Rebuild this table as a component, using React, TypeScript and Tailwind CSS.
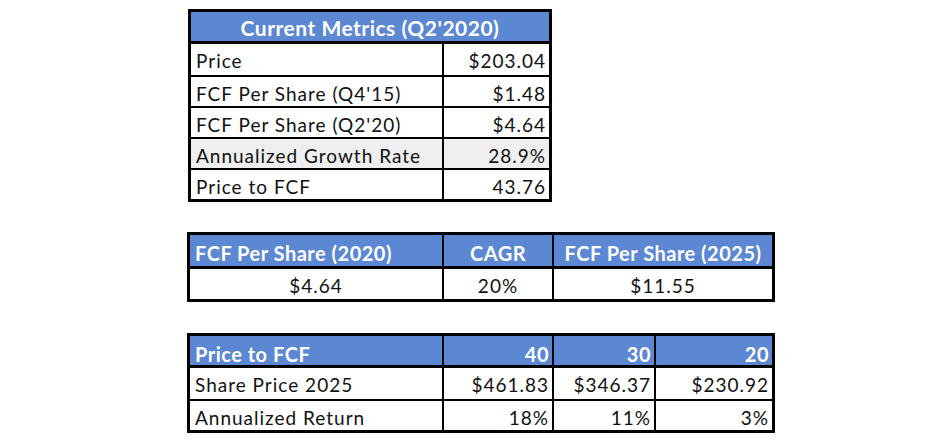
import React from "react";

const HEAD = "bg-[#5b87d3] text-white font-bold";
const BODY = "text-[#111] text-[19px] tracking-[1px]";

type Cell = { text: string; align: "left" | "center" | "right"; cls?: string };

const alignCls = (a: Cell["align"]) =>
  a === "left" ? "justify-start pl-[5px]" : a === "right" ? "justify-end pr-[3px]" : "justify-center";

const Row = ({
  cols,
  cells,
  height,
  className,
}: {
  cols: string;
  cells: Cell[];
  height: string;
  className?: string;
}) => (
  <div className={`grid ${cols} ${height} ${className ?? ""}`}>
    {cells.map((c, i) => (
      <div
        key={i}
        className={`flex items-center pt-[3px] whitespace-nowrap ${alignCls(c.align)} ${
          i > 0 ? "border-l-2 border-black" : ""
        } ${c.cls ?? ""}`}
      >
        {c.text}
      </div>
    ))}
  </div>
);

const metrics = [
  ["Price", "$203.04", ""],
  ["FCF Per Share (Q4'15)", "$1.48", ""],
  ["FCF Per Share (Q2'20)", "$4.64", ""],
  ["Annualized Growth Rate", "28.9%", "bg-[#efefef]"],
  ["Price to FCF", "43.76", ""],
];

export default function App() {
  return (
    <div className="min-h-screen bg-white pl-[187px] pt-[9px] font-['Lato',sans-serif]">
      {/* current metrics */}
      <div className="ml-[1px] w-[364px] border-[3px] border-black">
        <div
          className={`${HEAD} h-[32px] border-b-[3px] border-black flex items-center justify-center pt-[2px] text-[21px] tracking-[0.5px]`}
        >
          Current Metrics (Q2'2020)
        </div>
        {metrics.map(([label, value, bg], i) => (
          <Row
            key={label}
            cols="grid-cols-[251px_1fr]"
            height="h-[31px]"
            className={`${BODY} ${bg} ${i > 0 ? "border-t-2 border-black" : ""}`}
            cells={[
              { text: label, align: "left" },
              { text: value, align: "right" },
            ]}
          />
        ))}
      </div>

      {/* fcf growth */}
      <div className="mt-[30px] w-[588px] border-[3px] border-black">
        <Row
          cols="grid-cols-[252px_110px_1fr]"
          height="h-[34px]"
          className={`${HEAD} text-[20px] tracking-[0.5px] border-b-[3px] border-black`}
          cells={[
            { text: "FCF Per Share (2020)", align: "left" },
            { text: "CAGR", align: "center" },
            { text: "FCF Per Share (2025)", align: "center" },
          ]}
        />
        <Row
          cols="grid-cols-[252px_110px_1fr]"
          height="h-[30px]"
          className={BODY}
          cells={[
            { text: "$4.64", align: "center" },
            { text: "20%", align: "center" },
            { text: "$11.55", align: "center" },
          ]}
        />
      </div>

      {/* valuation */}
      <div className="mt-[31px] w-[588px] border-[3px] border-black">
        <Row
          cols="grid-cols-[252px_110px_102px_1fr]"
          height="h-[32px]"
          className={`${HEAD} text-[20px] tracking-[0.5px] border-b-[3px] border-black`}
          cells={[
            { text: "Price to FCF", align: "left" },
            { text: "40", align: "right" },
            { text: "30", align: "right" },
            { text: "20", align: "right" },
          ]}
        />
        <Row
          cols="grid-cols-[252px_110px_102px_1fr]"
          height="h-[31px]"
          className={BODY}
          cells={[
            { text: "Share Price 2025", align: "left" },
            { text: "$461.83", align: "right" },
            { text: "$346.37", align: "right" },
            { text: "$230.92", align: "right" },
          ]}
        />
        <Row
          cols="grid-cols-[252px_110px_102px_1fr]"
          height="h-[31px]"
          className={`${BODY} border-t-2 border-black`}
          cells={[
            { text: "Annualized Return", align: "left" },
            { text: "18%", align: "right" },
            { text: "11%", align: "right" },
            { text: "3%", align: "right" },
          ]}
        />
      </div>
    </div>
  );
}
